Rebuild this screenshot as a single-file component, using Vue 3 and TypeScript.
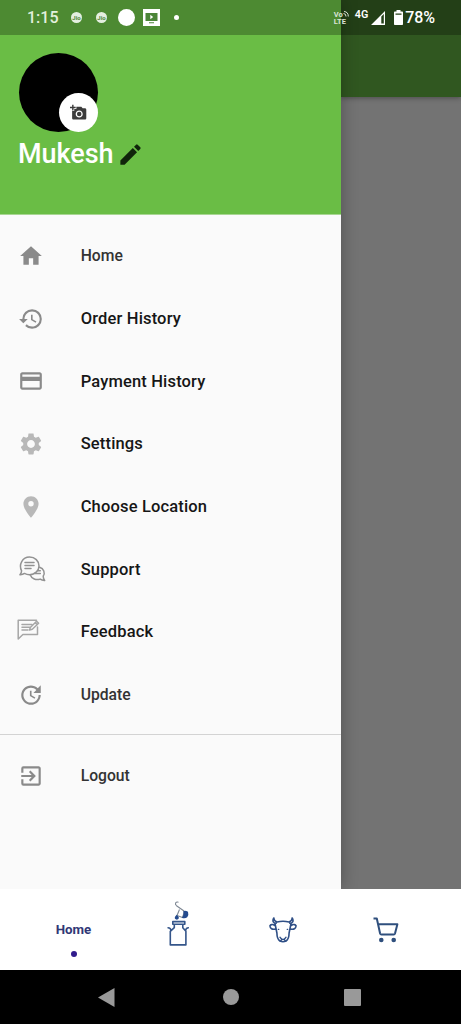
<script setup lang="ts">
interface MenuItem {
  label: string
  icon: string
  strong?: boolean
}

const menu: MenuItem[] = [
  { label: 'Home', icon: 'home' },
  { label: 'Order History', icon: 'history', strong: true },
  { label: 'Payment History', icon: 'card', strong: true },
  { label: 'Settings', icon: 'gear', strong: true },
  { label: 'Choose Location', icon: 'pin', strong: true },
  { label: 'Support', icon: 'support', strong: true },
  { label: 'Feedback', icon: 'feedback', strong: true },
  { label: 'Update', icon: 'update' },
]

const glyphs: Record<string, string> = {
  home: 'M10 20v-6h4v6h5v-8h3L12 3 2 12h3v8z',
  history:
    'M13 3a9 9 0 0 0-9 9H1l3.890 3.890.07.14L9 12H6c0-3.870 3.130-7 7-7s7 3.130 7 7-3.130 7-7 7c-1.930 0-3.680-.79-4.940-2.060l-1.420 1.420A8.954 8.954 0 0 0 13 21a9 9 0 0 0 0-18zm-1 5v5l4.280 2.540.72-1.210-3.500-2.080V8H12z',
  card: 'M20 4H4c-1.110 0-1.990.89-1.990 2L2 18c0 1.110.89 2 2 2h16c1.110 0 2-.89 2-2V6c0-1.110-.89-2-2-2zm0 14H4v-6h16v6zm0-10H4V6h16v2z',
  gear: 'M19.14 12.94c.04-.3.06-.61.06-.94 0-.32-.02-.64-.07-.94l2.03-1.58c.18-.14.23-.41.12-.61l-1.92-3.32c-.12-.22-.37-.29-.59-.22l-2.39.96c-.5-.38-1.03-.7-1.62-.94l-.36-2.54c-.04-.24-.24-.41-.48-.41h-3.84c-.24 0-.43.17-.47.41l-.36 2.54c-.59.24-1.13.57-1.62.94l-2.39-.96c-.22-.08-.47 0-.59.22L2.74 8.87c-.12.21-.08.47.12.61l2.03 1.58c-.05.3-.09.63-.09.94s.02.64.07.94l-2.03 1.58c-.18.14-.23.41-.12.61l1.92 3.32c.12.22.37.29.59.22l2.39-.96c.5.38 1.03.7 1.62.94l.36 2.54c.05.24.24.41.48.41h3.84c.24 0 .44-.17.47-.41l.36-2.54c.59-.24 1.13-.56 1.62-.94l2.39.96c.22.08.47 0 .59-.22l1.92-3.32c.12-.22.07-.47-.12-.61l-2.01-1.58zM12 15.6c-1.98 0-3.6-1.62-3.6-3.6s1.62-3.6 3.6-3.6 3.6 1.62 3.6 3.6-1.62 3.6-3.6 3.6z',
  pin: 'M12 2C8.13 2 5 5.13 5 9c0 5.25 7 13 7 13s7-7.75 7-13c0-3.87-3.13-7-7-7zm0 9.500a2.500 2.500 0 0 1 0-5 2.500 2.500 0 0 1 0 5z',
  update:
    'M21 10.120h-6.780l2.740-2.820c-2.730-2.700-7.150-2.800-9.880-.1-2.730 2.710-2.730 7.080 0 9.790s7.150 2.710 9.880 0C18.320 15.650 19 14.080 19 12.100h2c0 1.980-.88 4.550-2.640 6.290-3.510 3.480-9.210 3.480-12.720 0-3.500-3.470-3.530-9.110-.02-12.580s9.140-3.470 12.650 0L21 3v7.120zM12.500 8v4.250l3.500 2.080-.72 1.210L11 13V8h1.500z',
}
</script>

<template>
  <div class="phone">
    <main class="stage">
      <aside class="drawer">
        <header class="profile">
          <div class="avatar">
            <button class="camera" aria-label="Add photo">
              <svg width="17" height="17" viewBox="0 0 24 24" fill="#3c3c3c">
                <path d="M3 4V1h2v3h3v2H5v3H3V6H0V4h3zm3 6V7h3V4h7l1.830 2H21c1.100 0 2 .9 2 2v12c0 1.100-.9 2-2 2H5c-1.100 0-2-.9-2-2V10h3zm7 9c2.760 0 5-2.240 5-5s-2.240-5-5-5-5 2.240-5 5 2.240 5 5 5zm-3.200-5a3.200 3.200 0 0 0 6.400 0 3.200 3.200 0 0 0-6.400 0z" />
              </svg>
            </button>
          </div>
          <div class="name-row">
            <span class="name">Mukesh</span>
            <svg width="27" height="27" viewBox="0 0 24 24" fill="#10240b">
              <path d="M3 17.250V21h3.750L17.810 9.940l-3.750-3.750L3 17.250zM20.710 7.040c.39-.39.39-1.020 0-1.410l-2.340-2.340a.996.996 0 0 0-1.410 0l-1.830 1.830 3.750 3.750 1.830-1.830z" />
            </svg>
          </div>
        </header>

        <nav class="menu">
          <a v-for="item in menu" :key="item.label" class="row" :class="{ strong: item.strong }">
            <svg v-if="item.icon === 'support'" class="icon line" viewBox="0 0 26 26" fill="none" stroke="#929292" stroke-width="1.500" stroke-linejoin="round" stroke-linecap="round">
              <path d="M2.600 14.800C-.6 8.500 3.500 1 10.500 1 16 1 20 5 20 9.900c0 5-4.200 8.800-9.500 8.800-2 0-3.600-.5-5-1.300-1.300 1-2.700 1.400-4.600 1.300 1-.9 1.700-2.200 1.700-3.900z" />
              <path d="M6 6.500h9M6 9.500h9M6 12.500h6M20.600 11.300c4.200 1.300 5.800 5.400 3.600 8.900 0 1.900.5 3.100 1.500 4.200-1.900.1-3.300-.4-4.500-1.300-4 1.400-8.600-.2-9.900-4M18.800 14.800h2.500M15.500 17.600h5.800" />
            </svg>
            <svg v-else-if="item.icon === 'feedback'" class="icon feedback" viewBox="0 0 26 26" fill="none" stroke="#a6a6a6" stroke-width="1.500" stroke-linejoin="round" stroke-linecap="round">
              <path d="M19.500 3.300H1.200V22l4.700-4.500h14.600V10M5 7.400h10M5 10.200h7.500M5 13h6" />
              <path d="M13.300 10.500l6.300-6.200 2 2-6.300 6-2.700.7zM18.200 5.600l2 2" />
            </svg>
            <svg v-else class="icon" :class="item.icon" viewBox="0 0 24 24"><path :d="glyphs[item.icon]" /></svg>
            <span>{{ item.label }}</span>
          </a>
        </nav>
        <div class="logout">
          <a class="row">
            <svg class="icon" viewBox="0 0 24 24">
              <path d="M10.090 15.590 11.500 17l5-5-5-5-1.410 1.410L12.670 11H3v2h9.670l-2.580 2.590zM19 3H5a2 2 0 0 0-2 2v4h2V5h14v14H5v-4H3v4a2 2 0 0 0 2 2h14c1.100 0 2-.9 2-2V5c0-1.100-.9-2-2-2z" />
            </svg>
            <span>Logout</span>
          </a>
        </div>
      </aside>
      <section class="behind"><div class="appbar"></div></section>

      <div class="status">
        <div class="status-left">
          <span class="clock">1:15</span>
          <span class="jio">Jio</span>
          <span class="jio">Jio</span>
          <span class="disc"></span>
          <svg class="cast" width="17" height="17" viewBox="0 0 17 17">
            <path fill="#fff" d="M0 0h17v17H0z" />
            <path fill="#4b8537" d="M2.500 4h12v8h-12zM6 13.200h5v1H6z" />
            <path fill="#fff" d="M7.300 5.800v4.400L10.200 8z" />
          </svg>
          <span class="dot"></span>
        </div>
        <div class="status-right">
          <span class="volte"><span>Vo<svg width="6" height="6" viewBox="0 0 6 6" fill="none" stroke="currentColor"><path d="M.5 2.500Q3 2.500 3 5.500M1 .5q4.300.3 4.300 5" /></svg></span><span>LTE</span></span>
          <span class="fourg">4G</span>
          <svg class="signal" width="14" height="14" viewBox="0 0 14 14">
            <path fill="#fff" fill-rule="evenodd" d="M14 0v14H0zM10.300 5.500v7H12.800V3z" />
          </svg>
          <svg class="battery" width="9" height="15" viewBox="0 0 9 15">
            <path fill="#fff" fill-rule="evenodd" d="M2.500 0h4v1.500H8c.6 0 1 .4 1 1V14c0 .6-.4 1-1 1H1c-.6 0-1-.4-1-1V2.500c0-.6.4-1 1-1h1.500zM1.500 3.500v1.300h6V3.500z" />
          </svg>
          <span class="percent">78%</span>
        </div>
      </div>
    </main>

    <nav class="tabs">
      <a class="tab active"><span>Home</span><i></i></a>
      <a class="tab">
        <svg width="24" height="46" viewBox="0 0 24 46" fill="none" stroke="#35568a" stroke-width="1.600" stroke-linejoin="round">
          <path stroke="#7d8793" stroke-width="1.100" d="M11.500 1.200C8.500.5 7.500 3 9.500 4.700l7.500 5.300M12.500 8.500l-2.500 6 5.500 2 2-6" />
          <path fill="#244b8e" stroke="none" d="M16.200 10.200q2.300-.9 4.800.6 1 3-.8 5.400-2.200 1.900-5.400.6 2.500-2.700 1.400-6.600zM9.700 13.800q4.300 3.600.2 5-4.300-1.200-.2-5z" />
          <path d="M5.800 20.600h12v2.600h-12zM7.300 23.200v3.500l-4 3.600v13.600h15.600V30.300l-3.100-3.600v-3.500M4 29.600c-.2-2-1.200-3-3.500-2.800M18.600 29.600c.2-2 1.300-3 3.300-2.800" />
        </svg>
      </a>
      <a class="tab">
        <svg width="28" height="26" viewBox="0 0 28 26" fill="none" stroke="#2f4f86" stroke-width="1.600" stroke-linejoin="round" stroke-linecap="round">
          <path d="M4.800 1C3.200 3.800 4 6.500 7.200 6.300M23.200 1c1.600 2.800.8 5.500-2.400 5.300M4.800 1Q5 4.200 8 5q6-1.500 12 0 3-.8 3.200-4" />
          <path d="M5.500 8.300C3.500 7 1.500 7.600.9 8.800c.2 2.700 2.400 4 5.300 3.300M22.500 8.300c2-1.300 4-.7 4.600.5-.2 2.700-2.400 4-5.300 3.300M6 6.500l1.900 9.500q.1 6 3 8 3.100 1.500 6.200 0 2.900-2 3-8L22 6.500" />
          <path stroke-width="1.300" d="M9.300 12.300h.5M18.200 12.300h.5M11 20.300l1.500 1.700M17 20.300l-1.500 1.700M11.500 24q2.500-3.500 5 0" />
        </svg>
      </a>
      <a class="tab">
        <svg width="26" height="26" viewBox="0 0 26 26" fill="none" stroke="#2f4f7d" stroke-width="2" stroke-linejoin="round">
          <path d="M.5 1.500h3.300l3.300 15q.3 1 1.300 1h12.300q1 0 1.300-1l2.400-9.300H5.200" />
          <circle cx="8.300" cy="23" r="2.300" fill="#2f4f7d" stroke="none" />
          <circle cx="20.700" cy="23" r="2.300" fill="#2f4f7d" stroke="none" />
        </svg>
      </a>
    </nav>

    <footer class="system">
      <svg width="17" height="19" viewBox="0 0 17 19"><path fill="#999" d="M16.500 0v19L0 9.500z" /></svg>
      <span class="sys-home"></span>
      <span class="sys-recent"></span>
    </footer>
  </div>
</template>

<style>
body {
  margin: 0;
}
</style>

<style scoped>
.phone {
  width: 461px;
  height: 1024px;
  display: flex;
  flex-direction: column;
  overflow: hidden;
  font-family: Roboto, sans-serif;
  background: #fff;
}
.stage {
  position: relative;
  height: 889px;
  display: flex;
  overflow: hidden;
}
.drawer {
  position: relative;
  z-index: 1;
  width: 341px;
  flex: none;
  background: #fafafa;
  box-shadow: 0 0 16px rgba(0, 0, 0, 0.3);
}
.profile {
  box-sizing: border-box;
  height: 215px;
  padding: 53px 0 0 19px;
  background: #6abd45;
  border-bottom: 1px solid #a8d692;
}
.avatar {
  display: flex;
  align-items: flex-end;
  justify-content: flex-end;
  width: 79px;
  height: 79px;
  border-radius: 50%;
  background: #000;
}
.camera {
  display: flex;
  align-items: center;
  justify-content: center;
  width: 39px;
  height: 39px;
  padding: 0 1px 0 0;
  border: 0;
  border-radius: 50%;
  background: #fff;
}
.name-row {
  display: flex;
  align-items: center;
  gap: 3px;
  height: 44px;
  margin-left: -1px;
}
.name {
  color: #fff;
  font-size: 27px;
  font-weight: 500;
  letter-spacing: -0.05px;
}
.menu {
  padding-top: 9.500px;
}
.row {
  display: flex;
  align-items: center;
  gap: 36.500px;
  height: 62.700px;
  padding-left: 18.200px;
  color: #333;
  font-size: 15.700px;
  font-weight: 500;
}
.strong {
  color: #161616;
  font-size: 16.500px;
  letter-spacing: 0.16px;
}
.icon {
  width: 26px;
  height: 26px;
  flex: none;
  fill: #8a8a8a;
  overflow: visible;
}
.icon[fill='none'] {
  fill: none;
}
.icon.line {
  margin-left: 0.800px;
  margin-right: -0.800px;
}
.icon.gear,
.icon.pin {
  fill: #b8b8b8;
}
.icon.feedback {
  margin-left: -1px;
  margin-right: 1px;
  transform: translateY(-2px);
}
.logout {
  margin-top: 8.400px;
  padding-top: 9px;
  border-top: 1.500px solid #d3d3d3;
}
.behind {
  flex: 1;
  background: #737373;
}
.appbar {
  height: 97px;
  background: #305720;
  box-shadow: 0 1px 5px rgba(0, 0, 0, 0.35);
}
.status {
  position: absolute;
  z-index: 2;
  inset: 0 0 auto;
  display: flex;
  justify-content: space-between;
  height: 34.500px;
  box-sizing: border-box;
  padding: 1px 26px 0 27px;
  background: rgba(0, 0, 0, 0.27);
  color: #fff;
}
.status-left,
.status-right {
  display: flex;
  align-items: center;
}
.clock {
  width: 44px;
  font-size: 16px;
  font-weight: 500;
  color: #e3f0dd;
}
.jio {
  width: 11px;
  height: 11px;
  margin-right: 14px;
  border-radius: 50%;
  background: #e4efdf;
  color: #4b8537;
  font-size: 6px;
  font-weight: 700;
  line-height: 11px;
  text-align: center;
}
.disc {
  width: 17px;
  height: 17px;
  margin-left: -3px;
  border-radius: 50%;
  background: #fff;
}
.cast {
  margin-left: 8px;
}
.dot {
  width: 5px;
  height: 5px;
  margin-left: 14px;
  border-radius: 50%;
  background: #fff;
}
.volte {
  display: flex;
  flex-direction: column;
  font-size: 7.500px;
  font-weight: 700;
  line-height: 7px;
  color: #dbe3d7;
}
.fourg {
  margin: -7px 3px 0 6px;
  font-size: 10.800px;
  font-weight: 600;
}
.signal {
  margin-left: -0.500px;
}
.battery {
  margin: 0 2px 0 9.500px;
}
.percent {
  font-size: 16px;
  font-weight: 500;
  letter-spacing: -0.1px;
}
.tabs {
  display: grid;
  grid-template-columns: repeat(4, 104px);
  justify-content: center;
  height: 81px;
  background: #fff;
}
.tab {
  display: flex;
  align-items: center;
  justify-content: center;
}
.tab:nth-child(2) {
  padding-bottom: 12px;
}
.tab:nth-child(4) {
  padding-right: 1px;
}
.active {
  flex-direction: column;
  gap: 12px;
  padding-top: 19px;
  padding-right: 2px;
  color: #303876;
  font-size: 13.300px;
  font-weight: 700;
  line-height: 18px;
}
.active i {
  width: 6px;
  height: 6px;
  border-radius: 50%;
  background: #311b8c;
}
.system {
  display: flex;
  align-items: center;
  padding-left: 98px;
  height: 54px;
  background: #000;
}
.sys-home {
  width: 16px;
  height: 16px;
  margin-left: 108px;
  border-radius: 50%;
  background: #999;
}
.sys-recent {
  width: 17px;
  height: 17px;
  margin-left: 105px;
  border-radius: 1px;
  background: #999;
}
</style>
